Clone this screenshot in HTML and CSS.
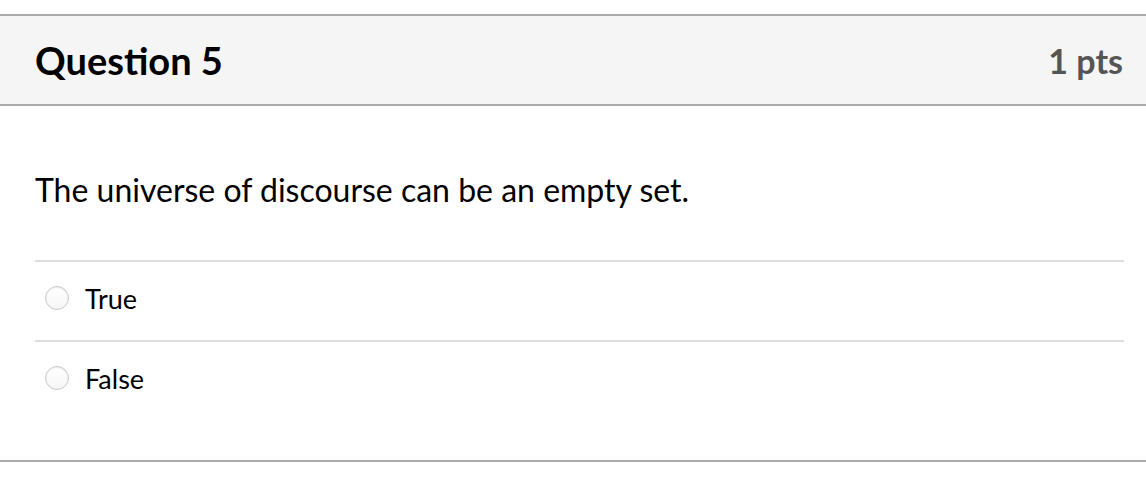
FILE: index.html
```html
<!DOCTYPE html>
<html>
<head>
<meta charset="utf-8">
<link rel="stylesheet" href="styles.css">
</head>
<body>
<div class="question">
  <div class="q-header">
    <h2 class="q-title">Question 5</h2>
    <span class="q-points">1 pts</span>
  </div>
  <div class="q-body">
    <p class="q-text">The universe of discourse can be an empty set.</p>
    <div class="answers">
      <label class="answer"><span class="radio"></span><span class="answer-label">True</span></label>
      <label class="answer"><span class="radio"></span><span class="answer-label">False</span></label>
    </div>
  </div>
</div>
</body>
</html>
```
FILE: styles.css
```css
html, body {
  margin: 0;
  padding: 0;
  background: #fff;
}
body {
  font-family: Lato, "Liberation Sans", sans-serif;
  color: #000;
  padding-top: 14px;
}
.question {
  border-top: 2px solid #aaaaaa;
  border-bottom: 2px solid #aaaaaa;
}
.q-header {
  display: flex;
  justify-content: space-between;
  align-items: center;
  background: #f5f5f5;
  border-bottom: 2px solid #aaaaaa;
  height: 88px;
  padding: 0 23px 0 35px;
}
.q-title {
  margin: 0;
  font-size: 38px;
  font-weight: 700;
  color: #000;
}
.q-points {
  font-size: 34px;
  font-weight: 700;
  color: #555;
}
.q-body {
  padding: 0 22px 0 35px;
}
.q-text {
  margin: 0;
  padding-top: 64px;
  padding-bottom: 50px;
  font-size: 32px;
  line-height: 40px;
}
.answers {
  padding-bottom: 40px;
}
.answer {
  display: flex;
  align-items: center;
  height: 72px;
  padding-bottom: 6px;
  border-top: 2px solid #dddddd;
  padding-left: 10px;
}
.radio {
  width: 22px;
  height: 22px;
  border-radius: 50%;
  border: 1px solid #c8c8c8;
  background: linear-gradient(#fff, #f6f6f6);
  box-shadow: inset 0 1px 2px rgba(0,0,0,0.08);
  margin-right: 16px;
  flex: none;
}
.answer-label {
  font-size: 27px;
}
```
